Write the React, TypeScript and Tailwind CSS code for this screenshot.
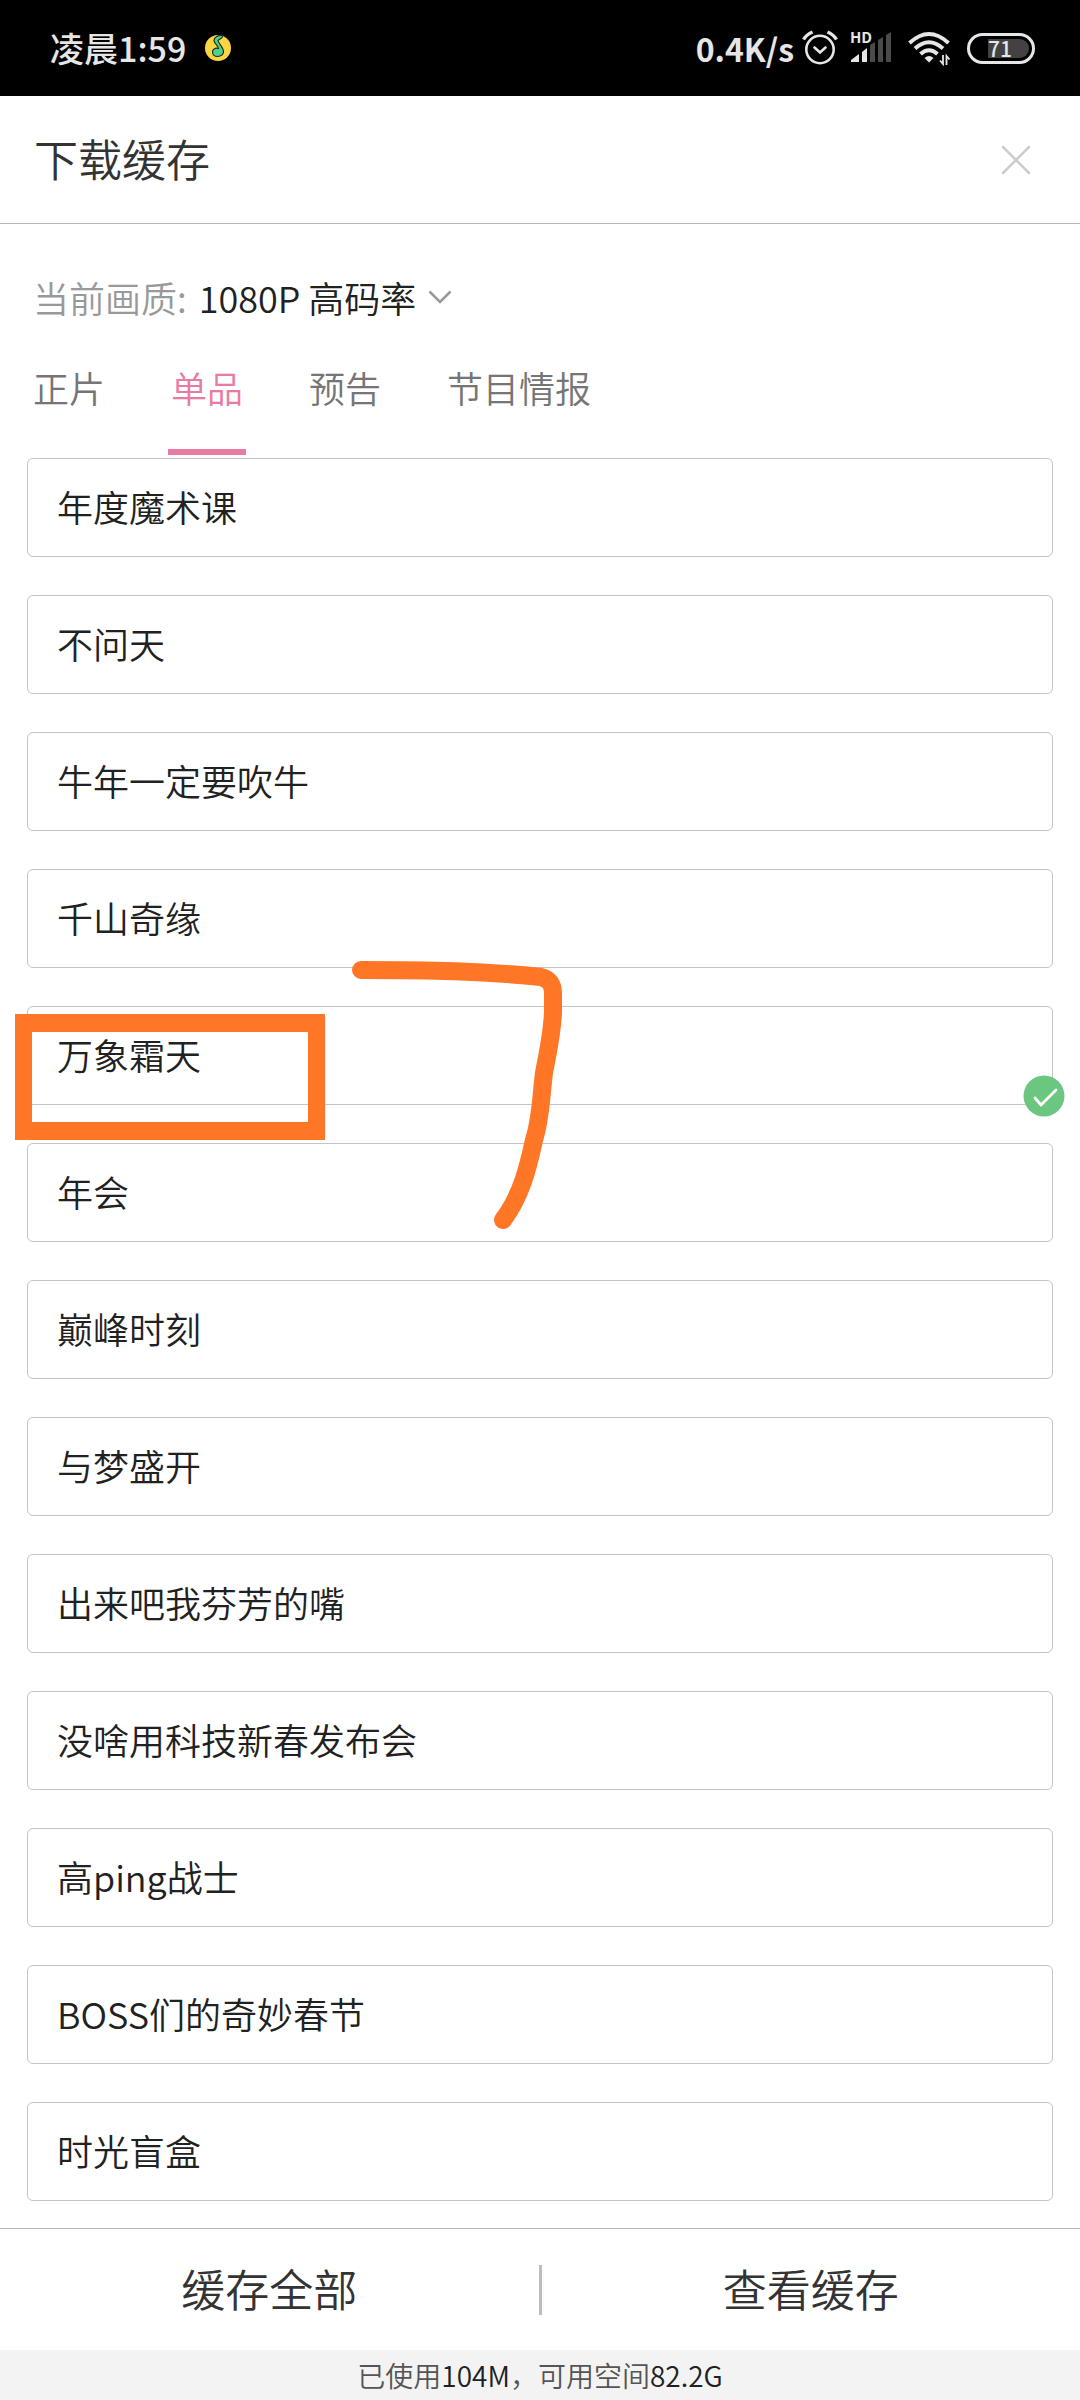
import { useState } from "react";

const tabs = ["正片", "单品", "预告", "节目情报"];

const episodes = [
  { title: "年度魔术课" },
  { title: "不问天" },
  { title: "牛年一定要吹牛" },
  { title: "千山奇缘" },
  { title: "万象霜天", cached: true },
  { title: "年会" },
  { title: "巅峰时刻" },
  { title: "与梦盛开" },
  { title: "出来吧我芬芳的嘴" },
  { title: "没啥用科技新春发布会" },
  { title: "高ping战士" },
  { title: "BOSS们的奇妙春节" },
  { title: "时光盲盒" },
];

function StatusBar() {
  return (
    <div className="flex h-24 items-center justify-between bg-black pr-[45px] pl-[50px] text-[#e6e6e6]">
      <div className="flex items-center gap-[18px]">
        <span className="text-[34px] leading-10 font-medium">凌晨1:59</span>
        <svg width="28" height="28" viewBox="0 0 28 28" aria-hidden="true">
          <circle cx="14" cy="14" r="13" fill="#fdd442" />
          <path
            d="M19 1.5 C14 1 10 3 10 6.5 C10 9.500 14 11 14.500 14.500 C11 13.500 8.500 15.500 8.500 18 C8.500 20.500 10.500 22.500 13.500 22.500 C17.500 22.500 20 20 19.500 17 C19 13 14.500 9.500 14 6.500 C15 5 18.500 5 19 1.500 Z"
            fill="#4fd08d"
            stroke="#16301f"
            strokeWidth="1.2"
          />
        </svg>
      </div>

      <div className="flex items-center">
        <span className="mr-2 text-[32px] leading-10 font-semibold">0.4K/s</span>
        {/* alarm */}
        <svg className="mr-3" width="36" height="36" viewBox="0 0 36 36" fill="none" stroke="currentColor" strokeWidth="2.600" aria-hidden="true">
          <circle cx="18" cy="19.500" r="13.700" />
          <path d="M1.500 9.500 Q4.500 4.500 10.500 2 M34.500 9.500 Q31.500 4.500 25.500 2" strokeWidth="3.400" />
          <path d="M12.500 17.500 L18 22.500 L23.500 17.500" strokeLinecap="round" />
        </svg>
        {/* signal */}
        <svg className="mr-4" width="42" height="46" viewBox="0 -6 42 46" aria-hidden="true">
          <text x="0" y="12" fontSize="15" fontWeight="700" fill="currentColor">HD</text>
          <path d="M1 31 V29 L9 23 V31 Z M12 31 V21 L17 17 V31 Z" fill="currentColor" />
          <path d="M20 31 V14 L25 11 V31 Z M28 31 V9 L33 6 V31 Z M36 31 V4 L41 1 V31 Z" fill="#4a4a4a" />
        </svg>
        {/* wifi */}
        <svg className="mr-4" width="43" height="36" viewBox="0 0 43 36" fill="none" stroke="currentColor" strokeWidth="4" aria-hidden="true">
          <path d="M1.500 13 Q21 -5 40.500 13 M7 18.500 Q21 6 35 18.500 M12.500 24 Q21 16.500 29.500 24" />
          <path d="M21 32.500 L16.500 28 Q21 24 25.500 28 Z" fill="currentColor" stroke="none" />
          <path d="M35 25 V34 L32 30.500 M38.500 35 V26 L41.500 29.500" strokeWidth="1.800" />
        </svg>
        <div className="flex h-[31px] w-[68px] rounded-full border-3 border-current p-[3px]">
          <div className="ml-[15px] flex flex-1 items-center rounded-r-full bg-[#424242] text-[21px] leading-5 font-medium">71</div>
        </div>
      </div>
    </div>
  );
}

export default function App() {
  const [tab, setTab] = useState("单品");

  return (
    <div className="flex min-h-screen flex-col bg-white font-['Noto_Sans_CJK_SC',sans-serif] font-[350] text-[#212121]" lang="zh-CN">
      <StatusBar />

      <header className="flex h-32 items-center justify-between border-b border-[#b9b9b9] pr-[49px] pl-[34px]">
        <h1 className="pb-1 text-[44px] leading-[60px] text-[#333333]">下载缓存</h1>
        <button aria-label="关闭">
          <svg width="30" height="30" viewBox="0 0 30 30" fill="none" stroke="#cccccc" strokeWidth="2.500" strokeLinecap="round">
            <path d="M2 2 L28 28 M28 2 L2 28" />
          </svg>
        </button>
      </header>

      <main className="flex-1">
        <div className="mt-[46px] flex h-[54px] items-center pl-[33px] text-[36px] leading-[54px]">
          <span className="mr-3 text-[#999999]">当前画质:</span>
          <button className="flex items-center gap-3">
            1080P 高码率
            <svg width="24" height="14" viewBox="0 0 24 14" fill="none" stroke="#999999" strokeWidth="2.500">
              <path d="M1.500 1.500 L12 12 L22.500 1.500" />
            </svg>
          </button>
        </div>

        <nav className="mt-9 flex gap-[60px] pl-[30px]" role="tablist">
          {tabs.map((t) => (
            <button
              key={t}
              role="tab"
              aria-selected={t === tab}
              onClick={() => setTab(t)}
              className={`h-[95px] border-b-6 px-[3px] pb-9 text-[36px] leading-[54px] ${
                t === tab ? "border-[#e87ba4] text-[#e87ba4]" : "border-transparent text-[#757575]"
              }`}
            >
              {t}
            </button>
          ))}
        </nav>

        <ul className="mt-[3px] flex flex-col gap-[38px] px-[27px] pb-[26px]">
          {episodes.map((e) => (
            <li key={e.title} className="relative">
              <button className="h-[99px] w-full rounded-md border border-[#c4c4c6] px-[29px] pb-1 text-left text-[36px] leading-[54px]">
                {e.title}
              </button>
              {e.cached && (
                <>
                  <svg className="absolute -right-3 -bottom-3" width="42" height="42" viewBox="0 0 42 42" aria-hidden="true">
                    <circle cx="21" cy="21" r="20.500" fill="#6bc780" />
                    <path d="M12 23 L18 30 L33 15" fill="none" stroke="#ffffff" strokeWidth="2.800" strokeLinecap="round" />
                  </svg>
                  <div className="absolute top-2 -left-3 z-10 h-[126px] w-[310px] border-x-17 border-y-18 border-[#ff7627]" />
                  <svg className="absolute -top-12 left-[324px] z-10" width="214" height="274" viewBox="0 0 214 274" fill="none" aria-hidden="true">
                    <path
                      d="M10 12 C80 12 130 13 190 19 Q202 22 202 35 V54 C201 78 196 98 193 115 C190 138 190 160 183 182 C177 210 170 238 152 262"
                      stroke="#ff7627"
                      strokeWidth="18"
                      strokeLinecap="round"
                      strokeLinejoin="round"
                    />
                  </svg>
                </>
              )}
            </li>
          ))}
        </ul>
      </main>

      <footer>
        <div className="flex h-[122px] items-center border-t border-[#b9b9b9] text-[44px] leading-[60px] text-[#333333]">
          <button className="flex-1 pb-1">缓存全部</button>
          <span className="h-[50px] w-[3px] bg-[#bdbdbd]" />
          <button className="flex-1 pb-1">查看缓存</button>
        </div>
        <p className="h-[50px] bg-[#f3f3f3] text-center text-[28px] leading-[50px] text-[#555555]">
          已使用<span className="text-[#212121]">104M</span>，可用空间<span className="text-[#212121]">82.2G</span>
        </p>
      </footer>
    </div>
  );
}
